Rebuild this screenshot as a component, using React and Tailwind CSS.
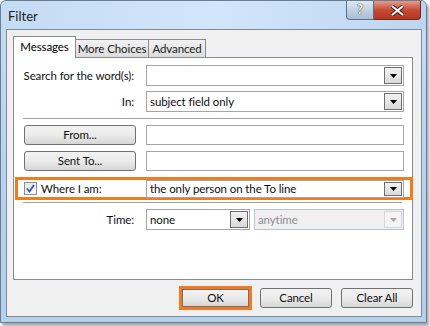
import React from 'react';

const font = { fontFamily: 'Lato, "Noto Sans", sans-serif' };

function Arrow({ disabled }) {
  return (
    <div
      className={`w-[18px] h-full flex items-center justify-center border ${
        disabled ? 'border-[#d5d5d5] bg-[#f4f4f4]' : 'border-[#707070] bg-gradient-to-b from-[#f2f2f2] to-[#d9d9d9]'
      }`}
    >
      <svg width="7" height="4" viewBox="0 0 7 4">
        <path d="M0 0h7L3.5 4z" fill={disabled ? '#a8a8a8' : '#000'} />
      </svg>
    </div>
  );
}

function Combo({ text, className = '', disabled }) {
  return (
    <div
      className={`flex items-center border ${
        disabled ? 'border-[#b3c3d8] bg-[#f0f0f0] text-[#8d8d8d]' : 'border-[#a5a5a5] bg-white text-[#101010]'
      } ${className}`}
    >
      <span className="flex-1 pl-[3px] leading-none whitespace-nowrap">{text}</span>
      <div className="h-full py-[1px] pr-[1px]">
        <Arrow disabled={disabled} />
      </div>
    </div>
  );
}

function Btn({ children, className = '' }) {
  return (
    <div
      className={`flex items-center justify-center border border-[#707070] rounded-[3px] bg-gradient-to-b from-[#f2f2f2] via-[#ebebeb] to-[#d6d6d6] text-[#101010] ${className}`}
    >
      {children}
    </div>
  );
}

function Sep() {
  return <div className="ml-[9px] mr-[10px] h-[2px] border-t border-[#a0a0a0] border-b border-b-white" />;
}

export default function App() {
  return (
    <div className="w-[430px] h-[326px] bg-white overflow-hidden text-[11.5px] tracking-[-0.1px]" style={font}>
      <div className="w-[427px] h-[323px] rounded-t-[6px] border border-[#6b7d90] bg-gradient-to-b from-[#c6ddf4] via-[#b8d3ef] to-[#b4cfec] flex flex-col shadow-[2px_3px_3px_rgba(0,0,0,0.35)]">
        {/* Title bar */}
        <div className="h-[28px] flex items-start bg-gradient-to-r from-[#c3dbf3] via-[#d2e6fa] to-[#bcd6f1] rounded-t-[6px]">
          <span className="ml-[7px] mt-[6px] text-[13px] tracking-normal text-[#1c1c1c]">Filter</span>
          <div className="ml-auto mr-[5px] flex">
            <div className="w-[28px] h-[19px] rounded-bl-[4px] border border-t-0 border-[#5d6f86] bg-gradient-to-b from-[#dce7f3] to-[#a9bdd4] flex items-center justify-center text-white font-bold text-[13px] [text-shadow:0_0_1px_#333,0_0_1px_#333]">
              ?
            </div>
            <div className="w-[47px] h-[19px] rounded-br-[4px] border border-t-0 border-l-0 border-[#6d2a22] bg-gradient-to-b from-[#e29b8c] via-[#c74a35] to-[#b53621] flex items-center justify-center">
              <svg width="15" height="11" viewBox="0 0 15 11">
                <path d="M2 1l11 9M13 1L2 10" stroke="#4a1a12" strokeWidth="4" />
                <path d="M2 1l11 9M13 1L2 10" stroke="#fff" strokeWidth="2.2" />
              </svg>
            </div>
          </div>
        </div>

        {/* Client area */}
        <div className="ml-[5px] mr-[4px] h-[288px] border border-[#7f8a98] bg-[#f0f0f0] flex flex-col px-[6px]">
          {/* Tabs */}
          <div className="flex items-end h-[21px] mt-[6px] relative z-10 whitespace-nowrap">
            <div className="w-[63px] h-[22px] border border-b-0 border-[#898c95] bg-white flex items-center justify-center -mb-[1px] pb-[1px]">
              Messages
            </div>
            <div className="w-[73px] h-[18px] border border-b-0 border-l-0 border-[#898c95] bg-gradient-to-b from-[#f2f2f2] to-[#dcdcdc] flex items-center justify-center text-[#202020]">
              More Choices
            </div>
            <div className="w-[57px] h-[18px] border border-b-0 border-l-0 border-[#898c95] bg-gradient-to-b from-[#f2f2f2] to-[#dcdcdc] flex items-center justify-center text-[#202020]">
              Advanced
            </div>
          </div>

          {/* Panel */}
          <div className="w-[400px] h-[223px] border border-[#898c95] bg-white flex flex-col">
            <div className="mt-[7px] flex h-[21px] items-center">
              <span className="w-[126px] text-right pr-[6px] text-[#101010] whitespace-nowrap">Search for the word(s):</span>
              <Combo text="" className="ml-[6px] w-[258px] h-[21px]" />
            </div>
            <div className="mt-[5px] flex h-[21px] items-center">
              <span className="w-[126px] text-right pr-[6px] text-[#101010]">In:</span>
              <Combo text="subject field only" className="ml-[6px] w-[258px] h-[21px]" />
            </div>
            <div className="mt-[6px]">
              <Sep />
            </div>
            <div className="mt-[5px] flex h-[20px] items-center">
              <Btn className="ml-[10px] w-[112px] h-[20px]">From...</Btn>
              <div className="ml-[10px] w-[258px] h-[20px] border border-[#a5a5a5] bg-white" />
            </div>
            <div className="mt-[6px] flex h-[20px] items-center">
              <Btn className="ml-[10px] w-[112px] h-[20px]">Sent To...</Btn>
              <div className="ml-[10px] w-[258px] h-[20px] border border-[#a5a5a5] bg-white" />
            </div>
            <div className="mt-[6px] ml-[1px] w-[398px] h-[23px] border-[3px] border-[#f47a20] flex items-center">
              <div className="ml-[6px] w-[13px] h-[13px] border border-[#8e8f8f] bg-gradient-to-br from-[#dfe3e8] to-[#fbfbfb] flex items-center justify-center">
                <svg width="9" height="9" viewBox="0 0 9 9">
                  <path d="M1 4.5l2.5 3L8 1" stroke="#3a56a0" strokeWidth="1.8" fill="none" />
                </svg>
              </div>
              <span className="ml-[4px] w-[104px] text-[#101010]">Where I am:</span>
              <Combo text="the only person on the To line" className="ml-[1px] w-[258px] h-[18px]" />
            </div>
            <div className="mt-[2px]">
              <Sep />
            </div>
            <div className="mt-[5px] flex h-[21px] items-center">
              <span className="w-[126px] text-right pr-[6px] text-[#101010]">Time:</span>
              <Combo text="none" className="ml-[6px] w-[104px] h-[21px]" />
              <Combo text="anytime" className="ml-[4px] w-[150px] h-[21px]" disabled />
            </div>
          </div>

          {/* Buttons */}
          <div className="mt-[8px] flex justify-end gap-[9px] mr-[2px]">
            <div className="border-[3px] border-[#f47a20] -my-[2px] -mr-[1px]">
              <Btn className="w-[67px] h-[18px] rounded-none border-[#8a8a8a]">OK</Btn>
            </div>
            <Btn className="w-[72px] h-[20px]">Cancel</Btn>
            <Btn className="w-[72px] h-[20px]">Clear All</Btn>
          </div>
        </div>
      </div>
    </div>
  );
}
